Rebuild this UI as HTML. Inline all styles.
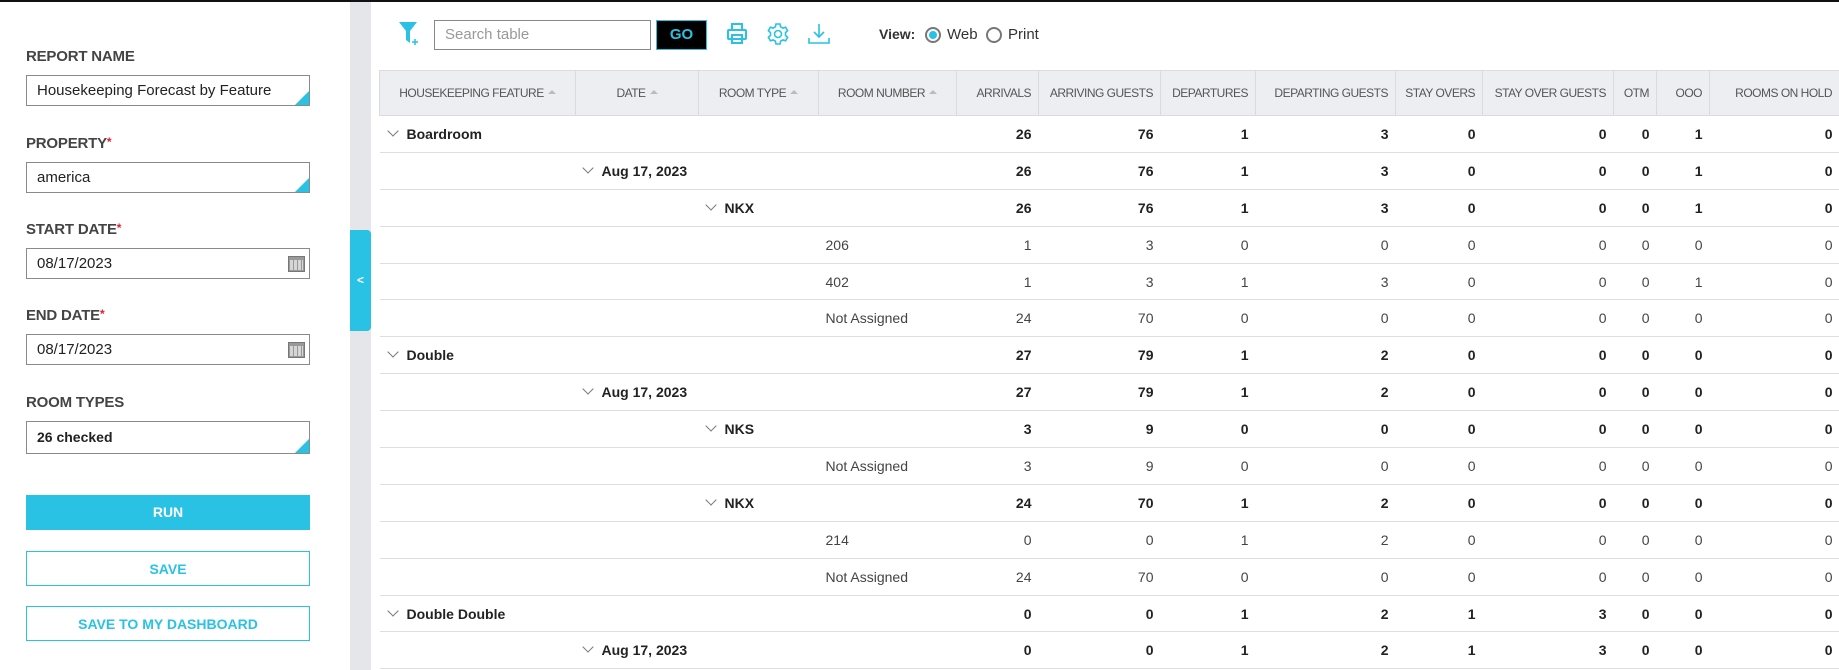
<!DOCTYPE html>
<html><head><meta charset="utf-8">
<style>
*{box-sizing:border-box;margin:0;padding:0}
html,body{width:1839px;height:670px;overflow:hidden;background:#fff;font-family:"Liberation Sans",sans-serif;color:#333}
.topline{position:absolute;left:0;top:0;width:1839px;height:2px;background:#111}
.side{position:absolute;left:0;top:2px;width:350px;height:668px;background:#fff}
.lbl{position:absolute;left:26px;font-size:15px;font-weight:bold;color:#444;letter-spacing:-0.2px}
.lbl i{color:#e0202a;font-style:normal;font-size:12px;vertical-align:top}
.inp{position:absolute;left:26px;width:284px;height:31px;border:1px solid #8a8a8a;font-size:15px;line-height:29px;padding-left:10px;color:#222;background:#fff}
.inp .tri{position:absolute;right:0;bottom:0;width:0;height:0;border-left:14px solid transparent;border-bottom:14px solid #29c2e4}
.cal{position:absolute;right:4px;top:7px;width:17px;height:16px;background:#999;border:1px solid #777}
.cal:after{content:"";position:absolute;left:1px;top:3px;width:13px;height:10px;background:
repeating-linear-gradient(90deg,#ddd 0 3px,#999 3px 4px),#ddd;opacity:.9}
.btn{position:absolute;left:26px;width:284px;height:35px;font-size:14px;font-weight:bold;text-align:center;line-height:34px}
.run{background:#29c2e4;color:#fff}
.out{border:1px solid #29c2e4;color:#29c2e4;background:#fff}
.strip{position:absolute;left:350px;top:2px;width:21px;height:668px;background:#e5e6ea}
.tab{position:absolute;left:350px;top:230px;width:21px;height:101px;background:#29c2e4;border-radius:0 4px 4px 0;color:#fff;font-size:12px;font-weight:bold;text-align:center;line-height:101px}
.search{position:absolute;left:434px;top:20px;width:217px;height:30px;border:1px solid #888;font-size:15px;color:#999;line-height:28px;padding-left:10px}
.go{position:absolute;left:656px;top:20px;width:51px;height:30px;background:#000;border:1px solid #29c2e4;color:#29c2e4;font-weight:bold;font-size:15px;text-align:center;line-height:28px}
.ico{position:absolute;top:22px}
.view{position:absolute;left:879px;top:26px;font-size:14px;font-weight:bold;color:#333}
.rlab{position:absolute;top:26px;font-size:15px;color:#333}
.radio{position:absolute;top:27px;width:16px;height:16px;border:2px solid #777;border-radius:50%}
.radio.on:after{content:"";position:absolute;left:2px;top:2px;width:8px;height:8px;border-radius:50%;background:#29c2e4}
table{position:absolute;left:379px;top:70px;border-collapse:collapse;table-layout:fixed;width:1460px}
th{background:#eceef1;height:45px;font-size:12px;font-weight:normal;color:#555;border:1px solid #d9dbdf;text-align:center;white-space:nowrap;letter-spacing:-0.5px;overflow:hidden}
th.r{text-align:right;padding-right:7px}
th .s{display:inline-block;width:0;height:0;border-left:4px solid transparent;border-right:4px solid transparent;border-bottom:4px solid #bbb;vertical-align:middle;margin-left:4px;position:relative;top:-2px}
td{height:36.9px;border-bottom:1px solid #dedede;font-size:14px;color:#444;white-space:nowrap;padding:0 7px;text-align:right}
td.t{text-align:left;padding-left:0}
tr.b td{font-weight:bold;color:#222}
.ch{display:inline-block;width:8px;height:8px;border-right:1px solid #777;border-bottom:1px solid #777;transform:rotate(45deg);margin-right:10px;position:relative;top:-4px}
</style></head><body>
<div class="topline"></div>
<div class="side">
<div class="lbl" style="top:46px">REPORT NAME</div>
<div class="inp" style="top:73px">Housekeeping Forecast by Feature<div class="tri"></div></div>
<div class="lbl" style="top:133px">PROPERTY<i>*</i></div>
<div class="inp" style="top:160px">america<div class="tri"></div></div>
<div class="lbl" style="top:219px">START DATE<i>*</i></div>
<div class="inp" style="top:246px">08/17/2023<div class="cal"></div></div>
<div class="lbl" style="top:305px">END DATE<i>*</i></div>
<div class="inp" style="top:332px">08/17/2023<div class="cal"></div></div>
<div class="lbl" style="top:392px">ROOM TYPES</div>
<div class="inp" style="top:419px;height:33px;line-height:31px;font-weight:bold;font-size:14px">26 checked<div class="tri"></div></div>
<div class="btn run" style="top:493px">RUN</div>
<div class="btn out" style="top:549px">SAVE</div>
<div class="btn out" style="top:604px">SAVE TO MY DASHBOARD</div>
</div>
<div class="strip"></div>
<div class="tab">&lt;</div>

<svg class="ico" style="left:398px;top:20px" width="24" height="28" viewBox="0 0 24 28"><path d="M1 2h18l-7 9v12l-4-3v-9z" fill="#29c2e4"/><path d="M17 19v6M14 22h6" stroke="#29c2e4" stroke-width="1.5"/></svg>
<div class="search">Search table</div>
<div class="go">GO</div>
<svg class="ico" style="left:726px" width="22" height="24" viewBox="0 0 22 24" fill="none" stroke="#29c2e4" stroke-width="2"><rect x="6" y="2" width="10" height="6"/><rect x="2" y="8" width="18" height="9" rx="1"/><rect x="6" y="13" width="10" height="8"/></svg>
<svg class="ico" style="left:766px" width="24" height="24" viewBox="0 0 24 24" fill="none" stroke="#29c2e4" stroke-width="1.6"><circle cx="12" cy="12" r="3.5"/><path d="M10 2h4l.6 2.8 2.3 1.3 2.7-.9 2 3.5-2.1 1.9v2.8l2.1 1.9-2 3.5-2.7-.9-2.3 1.3L14 22h-4l-.6-2.8-2.3-1.3-2.7.9-2-3.5 2.1-1.9v-2.8L2.4 8.7l2-3.5 2.7.9 2.3-1.3z"/></svg>
<svg class="ico" style="left:807px" width="24" height="24" viewBox="0 0 24 24" fill="none" stroke="#29c2e4" stroke-width="1.6"><path d="M12 2v13M7 10l5 5 5-5M2 16v5h20v-5"/></svg>
<div class="view">View:</div>
<div class="radio on" style="left:925px"></div><div class="rlab" style="left:947px">Web</div>
<div class="radio" style="left:986px"></div><div class="rlab" style="left:1008px">Print</div>

<table>
<colgroup><col style="width:196px"><col style="width:123px"><col style="width:120px"><col style="width:138px"><col style="width:82px"><col style="width:122px"><col style="width:95px"><col style="width:140px"><col style="width:87px"><col style="width:131px"><col style="width:43px"><col style="width:53px"><col style="width:130px"></colgroup>
<tr><th>HOUSEKEEPING FEATURE<span class="s"></span></th><th>DATE<span class="s"></span></th><th>ROOM TYPE<span class="s"></span></th><th>ROOM NUMBER<span class="s"></span></th><th class="r">ARRIVALS</th><th class="r">ARRIVING GUESTS</th><th class="r">DEPARTURES</th><th class="r">DEPARTING GUESTS</th><th class="r">STAY OVERS</th><th class="r">STAY OVER GUESTS</th><th class="r">OTM</th><th class="r">OOO</th><th class="r">ROOMS ON HOLD</th></tr>
<tr class="b"><td class="t" style="padding-left:9px"><span class="ch"></span>Boardroom</td><td></td><td></td><td></td><td>26</td><td>76</td><td>1</td><td>3</td><td>0</td><td>0</td><td>0</td><td>1</td><td>0</td></tr>
<tr class="b"><td></td><td class="t" style="padding-left:8px"><span class="ch"></span>Aug 17, 2023</td><td></td><td></td><td>26</td><td>76</td><td>1</td><td>3</td><td>0</td><td>0</td><td>0</td><td>1</td><td>0</td></tr>
<tr class="b"><td></td><td></td><td class="t" style="padding-left:8px"><span class="ch"></span>NKX</td><td></td><td>26</td><td>76</td><td>1</td><td>3</td><td>0</td><td>0</td><td>0</td><td>1</td><td>0</td></tr>
<tr><td></td><td></td><td></td><td class="t" style="padding-left:7px">206</td><td>1</td><td>3</td><td>0</td><td>0</td><td>0</td><td>0</td><td>0</td><td>0</td><td>0</td></tr>
<tr><td></td><td></td><td></td><td class="t" style="padding-left:7px">402</td><td>1</td><td>3</td><td>1</td><td>3</td><td>0</td><td>0</td><td>0</td><td>1</td><td>0</td></tr>
<tr><td></td><td></td><td></td><td class="t" style="padding-left:7px">Not Assigned</td><td>24</td><td>70</td><td>0</td><td>0</td><td>0</td><td>0</td><td>0</td><td>0</td><td>0</td></tr>
<tr class="b"><td class="t" style="padding-left:9px"><span class="ch"></span>Double</td><td></td><td></td><td></td><td>27</td><td>79</td><td>1</td><td>2</td><td>0</td><td>0</td><td>0</td><td>0</td><td>0</td></tr>
<tr class="b"><td></td><td class="t" style="padding-left:8px"><span class="ch"></span>Aug 17, 2023</td><td></td><td></td><td>27</td><td>79</td><td>1</td><td>2</td><td>0</td><td>0</td><td>0</td><td>0</td><td>0</td></tr>
<tr class="b"><td></td><td></td><td class="t" style="padding-left:8px"><span class="ch"></span>NKS</td><td></td><td>3</td><td>9</td><td>0</td><td>0</td><td>0</td><td>0</td><td>0</td><td>0</td><td>0</td></tr>
<tr><td></td><td></td><td></td><td class="t" style="padding-left:7px">Not Assigned</td><td>3</td><td>9</td><td>0</td><td>0</td><td>0</td><td>0</td><td>0</td><td>0</td><td>0</td></tr>
<tr class="b"><td></td><td></td><td class="t" style="padding-left:8px"><span class="ch"></span>NKX</td><td></td><td>24</td><td>70</td><td>1</td><td>2</td><td>0</td><td>0</td><td>0</td><td>0</td><td>0</td></tr>
<tr><td></td><td></td><td></td><td class="t" style="padding-left:7px">214</td><td>0</td><td>0</td><td>1</td><td>2</td><td>0</td><td>0</td><td>0</td><td>0</td><td>0</td></tr>
<tr><td></td><td></td><td></td><td class="t" style="padding-left:7px">Not Assigned</td><td>24</td><td>70</td><td>0</td><td>0</td><td>0</td><td>0</td><td>0</td><td>0</td><td>0</td></tr>
<tr class="b"><td class="t" style="padding-left:9px"><span class="ch"></span>Double Double</td><td></td><td></td><td></td><td>0</td><td>0</td><td>1</td><td>2</td><td>1</td><td>3</td><td>0</td><td>0</td><td>0</td></tr>
<tr class="b"><td></td><td class="t" style="padding-left:8px"><span class="ch"></span>Aug 17, 2023</td><td></td><td></td><td>0</td><td>0</td><td>1</td><td>2</td><td>1</td><td>3</td><td>0</td><td>0</td><td>0</td></tr>
</table>
</body></html>
